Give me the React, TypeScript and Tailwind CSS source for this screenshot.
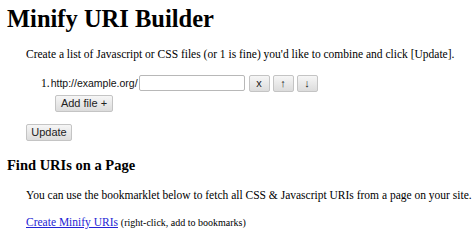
import { useState } from "react";

const sans = "[font-family:'Liberation_Sans',Arial,sans-serif]";
const btn = `h-[17px] whitespace-nowrap rounded-[2px] border border-[#c4c4c4] bg-gradient-to-b from-[#f6f6f6] to-[#dcdcdc] px-0 text-[11px] leading-[15px] text-[#222] ${sans}`;

export default function App() {
  const [uri, setUri] = useState("");

  return (
    <div className="h-[242px] w-[474px] overflow-hidden bg-white text-black [font-family:'Liberation_Serif','Times_New_Roman',serif]">
      <h1 className="pl-[7px] pt-[5px] text-[24.5px] font-bold leading-[28px]">
        Minify URI Builder
      </h1>
      <p className="mt-[14px] pl-[26px] text-[11.5px] leading-[14px]">
        Create a list of Javascript or CSS files (or 1 is fine) you'd like to
        combine and click [Update].
      </p>

      <div className="mt-[14px] flex h-[16px] items-center pl-[41px]">
        <span className="text-[11.5px] leading-[14px]">1.</span>
        <span
          className={`ml-px text-[10.5px] leading-[14px] text-[#111] ${sans}`}
        >
          http://example.org/
        </span>
        <input
          value={uri}
          onChange={(e) => setUri(e.target.value)}
          className="ml-px h-[16px] w-[106px] rounded-[2px] border border-[#b8b8b8] bg-white px-1 text-[11px] outline-none"
        />
        <button type="button" className={`${btn} ml-[4px] w-[21px]`}>
          x
        </button>
        <button type="button" className={`${btn} ml-[3px] w-[21px]`}>
          ↑
        </button>
        <button type="button" className={`${btn} ml-[3px] w-[21px]`}>
          ↓
        </button>
      </div>
      <div className="mt-[4px] flex pl-[55px]">
        <button type="button" className={`${btn} w-[58px]`}>
          Add file +
        </button>
      </div>
      <div className="mt-[12px] flex pl-[26px]">
        <button type="button" className={`${btn} w-[46px]`}>
          Update
        </button>
      </div>

      <h2 className="mt-[16px] pl-[7px] text-[14.5px] font-bold leading-[16px]">
        Find URIs on a Page
      </h2>
      <p className="mt-[15px] pl-[26px] text-[11.5px] leading-[14px]">
        You can use the bookmarklet below to fetch all CSS &amp; Javascript URIs
        from a page on your site.
      </p>
      <p className="mt-[13px] pl-[26px] text-[11.5px] leading-[14px]">
        <a href="#" className="text-[#2424d4] underline">
          Create Minify URIs
        </a>{" "}
        <span className="text-[10px]">(right-click, add to bookmarks)</span>
      </p>
    </div>
  );
}
